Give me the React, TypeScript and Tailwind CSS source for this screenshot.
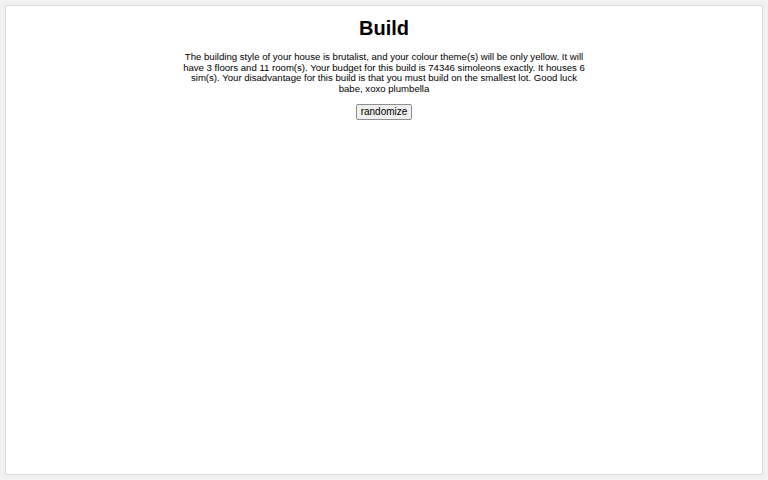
export default function App() {
  return (
    <div className="min-h-screen bg-[#f2f2f2] p-[5px] font-['Liberation_Sans',Arial,sans-serif]">
      <main className="h-[470px] border border-[#dcdcdc] bg-white text-center text-black">
        <h1 className="pt-[10px] text-[20px] font-bold leading-[24px]">Build</h1>
        <p className="mx-auto mt-[12px] w-[402px] text-[9.6px] leading-[10.7px]">
          The building style of your house is brutalist, and your colour theme(s) will be only
          yellow. It will have 3 floors and 11 room(s). Your budget for this build is 74346
          simoleons exactly. It houses 6 sim(s). Your disadvantage for this build is that you
          must build on the smallest lot. Good luck babe, xoxo plumbella
        </p>
        <button className="mt-[9px] rounded-[2px] border border-[#8f8f8f] bg-[#efefef] px-[4px] py-[1px] text-[10px] leading-[12px]">
          randomize
        </button>
      </main>
    </div>
  )
}
